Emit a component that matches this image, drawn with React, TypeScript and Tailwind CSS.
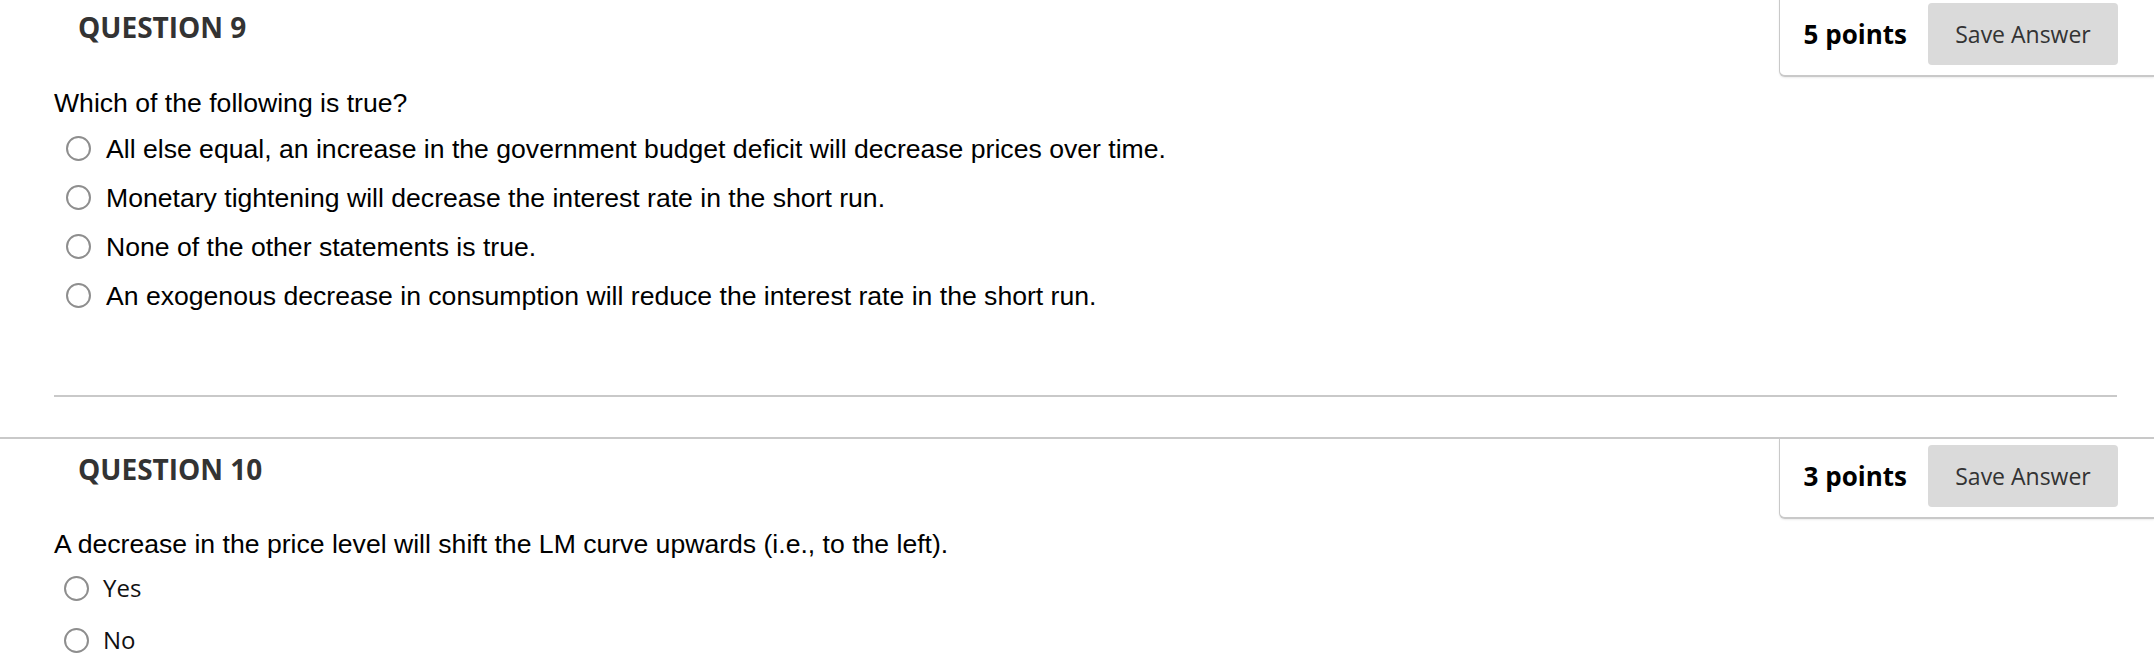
import React from "react";

type Opt = { label: string };

function Radio({ className }: { className?: string }) {
  return (
    <span
      className={
        "inline-block w-[25px] h-[25px] rounded-full border-2 border-[#8e8e8e] bg-white shrink-0 " +
        (className ?? "")
      }
    />
  );
}

function Header({ title, points }: { title: string; points: string }) {
  return (
    <div className="flex items-start justify-between">
      <h2 className="pl-[78px] pt-[11px] text-[28px] leading-[38px] font-bold text-[#333333] [font-family:'Open_Sans',sans-serif]">
        {title}
      </h2>
      <div className="flex items-center pl-[24px] pr-[36px] pt-[6px] pb-[10px] border-l border-b-2 border-[#c9c9c9] rounded-bl-[6px] shadow-[0_1px_2px_rgba(0,0,0,0.08)] bg-white">
        <span className="text-[26px] leading-[34px] font-bold text-black [font-family:'Open_Sans',sans-serif] whitespace-nowrap">
          {points}
        </span>
        <button className="ml-[21px] w-[190px] h-[62px] rounded-[4px] bg-[#dadada] text-[23px] text-[#333333] [font-family:'Open_Sans',sans-serif] whitespace-nowrap">
          Save Answer
        </button>
      </div>
    </div>
  );
}

export default function App() {
  const q9: Opt[] = [
    { label: "All else equal, an increase in the government budget deficit will decrease prices over time." },
    { label: "Monetary tightening will decrease the interest rate in the short run." },
    { label: "None of the other statements is true." },
    { label: "An exogenous decrease in consumption will reduce the interest rate in the short run." },
  ];
  return (
    <div className="w-[2154px] h-[668px] overflow-hidden bg-white">
      <section className="-mt-[5px] border-t-2 border-[#c9c9c9]">
        <Header title="QUESTION 9" points="5 points" />
        <div className="pl-[54px] pr-[37px]">
          <p className="mt-[11px] text-[26.6px] leading-[30px] text-black [font-family:'Liberation_Sans',Arial,sans-serif]">
            Which of the following is true?
          </p>
          <div className="mt-[6px]">
            {q9.map((o) => (
              <label key={o.label} className="flex items-center h-[49px] pl-[12px]">
                <Radio />
                <span className="ml-[15px] text-[26.6px] leading-[30px] text-black [font-family:'Liberation_Sans',Arial,sans-serif] whitespace-nowrap">
                  {o.label}
                </span>
              </label>
            ))}
          </div>
          <div className="mt-[75px] mb-[40px] h-[2px] bg-[#c9c9c9]" />
        </div>
      </section>
      <section className="border-t-2 border-[#c9c9c9]">
        <Header title="QUESTION 10" points="3 points" />
        <div className="pl-[54px] pr-[37px]">
          <p className="mt-[10px] text-[26.6px] leading-[30px] text-black [font-family:'Liberation_Sans',Arial,sans-serif]">
            A decrease in the price level will shift the LM curve upwards (i.e., to the left).
          </p>
          <div className="mt-[3px]">
            {["Yes", "No"].map((o) => (
              <label key={o} className="flex items-center h-[52px] pl-[10px]">
                <Radio />
                <span className="ml-[14px] text-[24px] leading-[30px] text-[#111111] [font-family:'Open_Sans',sans-serif]">
                  {o}
                </span>
              </label>
            ))}
          </div>
        </div>
      </section>
    </div>
  );
}
